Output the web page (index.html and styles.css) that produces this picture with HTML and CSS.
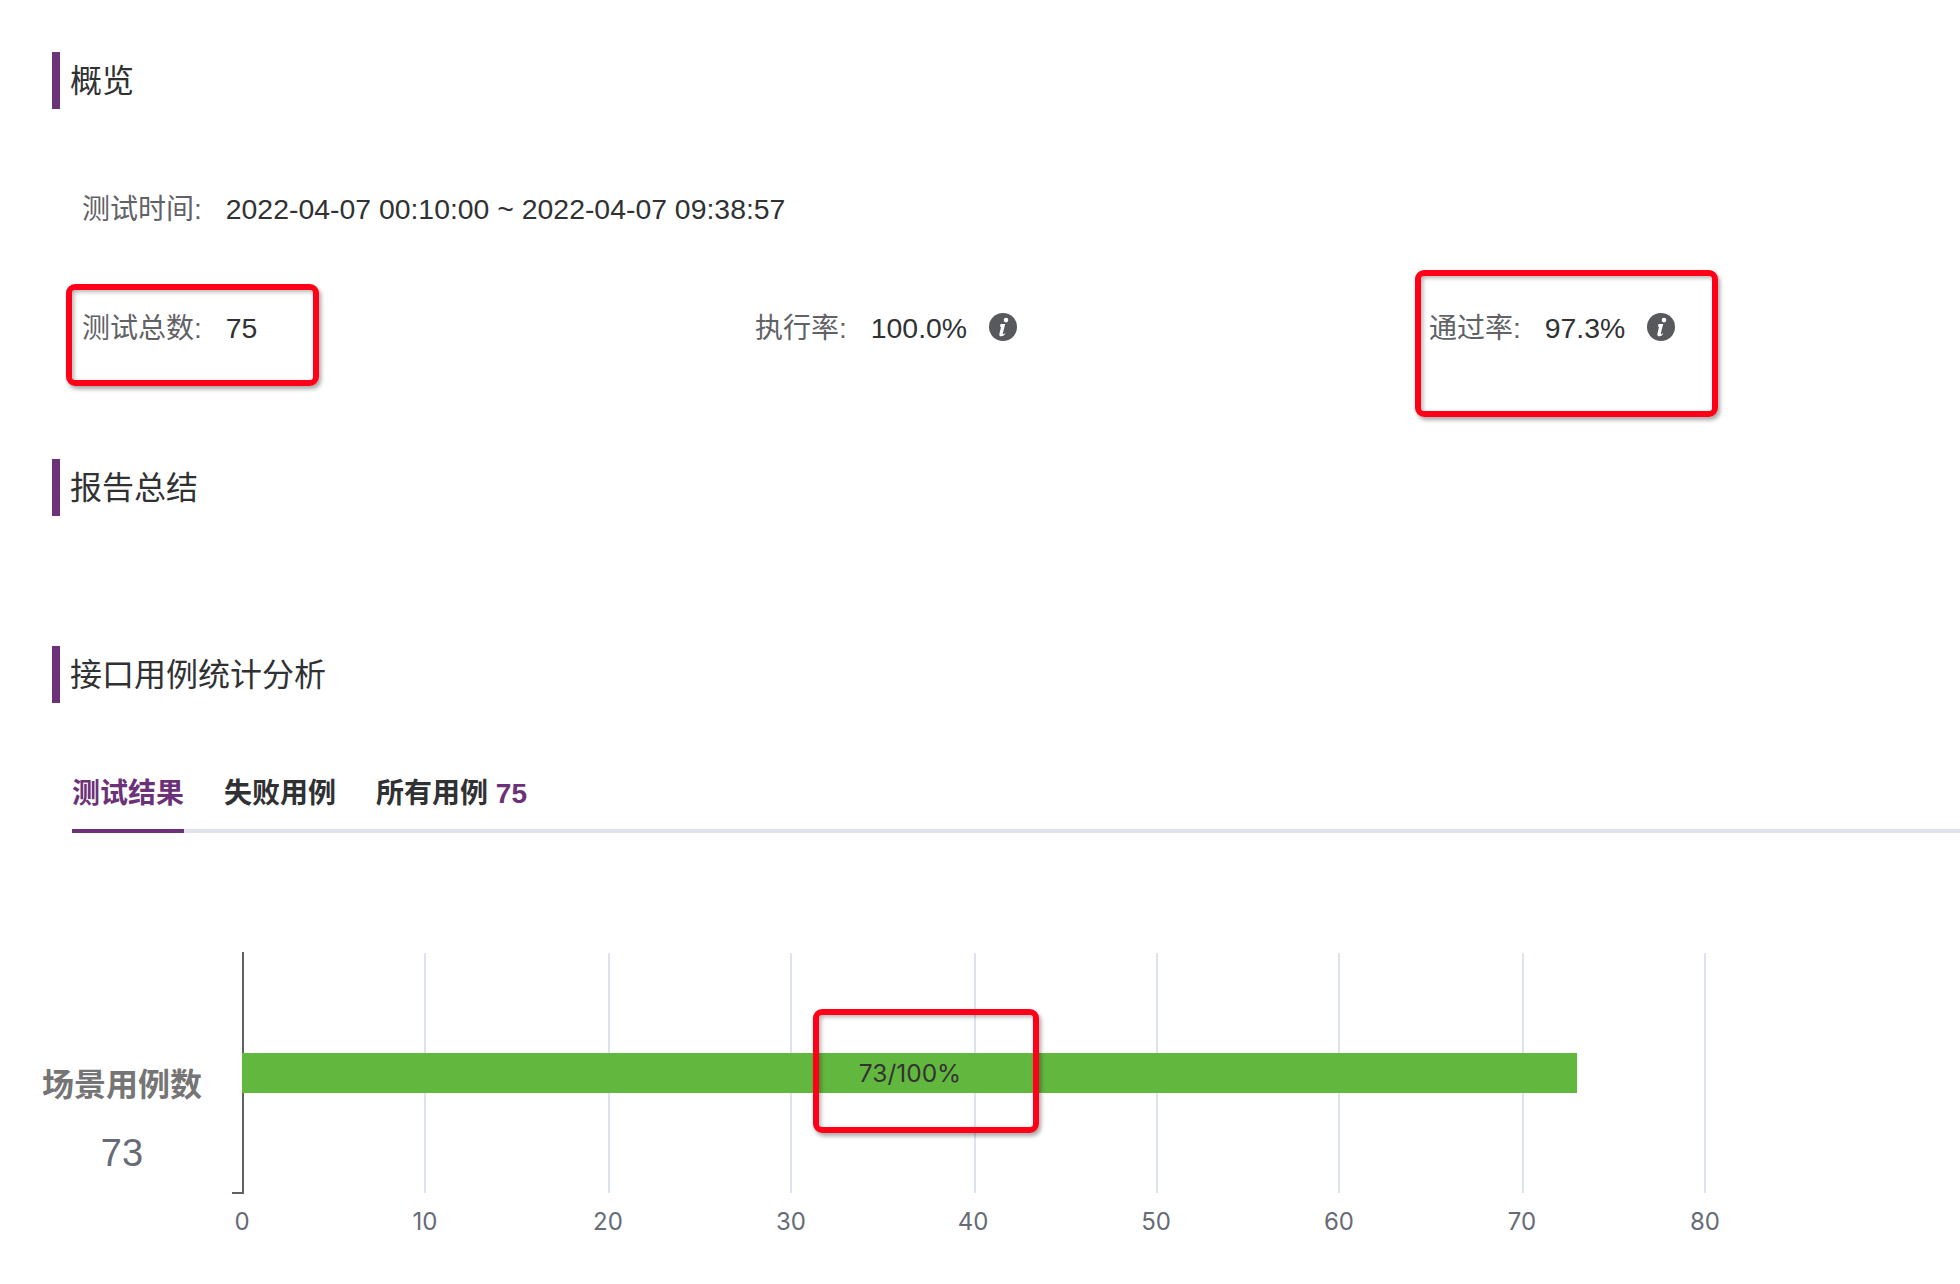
FILE: index.html
```html
<!DOCTYPE html>
<html lang="zh-CN">
<head>
<meta charset="utf-8">
<title>概览</title>
<link rel="stylesheet" href="styles.css">
</head>
<body>
<main class="page">
  <h2 class="section-title">概览</h2>
  <div class="row row-time"><span class="label">测试时间:</span><span class="value">2022-04-07 00:10:00 ~ 2022-04-07 09:38:57</span></div>
  <div class="row stats">
    <div class="stat"><span class="label">测试总数:</span><span class="value">75</span></div>
    <div class="stat"><span class="label">执行率:</span><span class="value">100.0%</span>
      <svg class="info" viewBox="0 0 28 28"><circle cx="14" cy="14" r="14"/><path class="info-i" d="M11.6 11h4.6l-2.4 9.4q-.2.8.4.8.6 0 1.5-1l.6.5q-1.8 2.6-4 2.6-2.4 0-1.9-2.4l1.5-6.5q.2-.9-.9-1l.1-.7zM17 4.8a2.3 2.3 0 1 1 0 4.6 2.3 2.3 0 0 1 0-4.6z"/></svg>
    </div>
    <div class="stat"><span class="label">通过率:</span><span class="value">97.3%</span>
      <svg class="info" viewBox="0 0 28 28"><circle cx="14" cy="14" r="14"/><path class="info-i" d="M11.6 11h4.6l-2.4 9.4q-.2.8.4.8.6 0 1.5-1l.6.5q-1.8 2.6-4 2.6-2.4 0-1.9-2.4l1.5-6.5q.2-.9-.9-1l.1-.7zM17 4.8a2.3 2.3 0 1 1 0 4.6 2.3 2.3 0 0 1 0-4.6z"/></svg>
    </div>
  </div>
  <h2 class="section-title title-summary">报告总结</h2>
  <h2 class="section-title title-analysis">接口用例统计分析</h2>
  <nav class="tabs">
    <span class="tab active">测试结果</span>
    <span class="tab">失败用例</span>
    <span class="tab">所有用例 <b class="count">75</b></span>
  </nav>
  <svg class="chart" viewBox="0 833 1960 451">
    <g class="grid">
      <rect x="424" y="953" width="2" height="240"/>
      <rect x="608" y="953" width="2" height="240"/>
      <rect x="790" y="953" width="2" height="240"/>
      <rect x="974" y="953" width="2" height="240"/>
      <rect x="1156" y="953" width="2" height="240"/>
      <rect x="1338" y="953" width="2" height="240"/>
      <rect x="1522" y="953" width="2" height="240"/>
      <rect x="1704" y="953" width="2" height="240"/>
    </g>
    <path class="axis" d="M243 952V1193H232"/>
    <rect class="bar" x="242" y="1053" width="1335" height="40"/>
    <text class="bar-label" x="910" y="1082">73/100%</text>
    <text class="cat-name" x="122" y="1096">场景用例数</text>
    <text class="cat-value" x="122" y="1166">73</text>
    <g class="ticks">
      <text x="242" y="1230">0</text>
      <text x="425" y="1230">10</text>
      <text x="608" y="1230">20</text>
      <text x="791" y="1230">30</text>
      <text x="973" y="1230">40</text>
      <text x="1156" y="1230">50</text>
      <text x="1339" y="1230">60</text>
      <text x="1522" y="1230">70</text>
      <text x="1705" y="1230">80</text>
    </g>
  </svg>
  <div class="mark mark-total"></div>
  <div class="mark mark-pass"></div>
  <div class="mark mark-bar"></div>
</main>
</body>
</html>
```
FILE: styles.css
```css
* { box-sizing: border-box; }
html, body { margin: 0; background: #fff; }
body {
  font-family: "Liberation Sans", "Noto Sans CJK SC", sans-serif;
  color: #303133;
}
.page {
  position: relative;
  width: 1960px;
  height: 1284px;
  overflow: hidden;
  padding-top: 52px;
}
.section-title {
  margin: 0 0 0 52px;
  height: 57px;
  padding-left: 10px;
  border-left: 8px solid #6c3279;
  font-size: 32px;
  font-weight: 400;
  line-height: 59px;
  color: #303133;
}
.title-summary { margin-top: 111px; }
.title-analysis { margin-top: 130px; }
.row {
  margin-left: 82px;
  height: 40px;
  font-size: 28px;
  line-height: 40px;
}
.row-time { margin-top: 80px; }
.stats {
  margin-top: 79px;
  display: grid;
  grid-template-columns: 673px 674px 1fr;
}
.stat { display: flex; align-items: center; height: 40px; }
.label { color: #606266; margin-right: 24px; }
.stat .label { margin-top: 2px; }
.value { color: #303133; font-size: 28.4px; }
.info { width: 28px; height: 28px; margin: 0 0 2px 22px; }
.info circle { fill: #58595d; }
.info-i { fill: #fff; }
.tabs {
  margin: 70px 0 0 72px;
  display: flex;
  gap: 40px;
  height: 60px;
  border-bottom: 4px solid #e0e2ec;
  font-size: 28px;
  line-height: 42px;
  font-weight: 700;
}
.tab { height: 60px; }
.tab.active { color: #6c3279; border-bottom: 4px solid #6c3279; }
.count { color: #6c3279; }
.chart { display: block; width: 1960px; height: 451px; }
.grid rect { fill: #dce3ee; }
.axis { fill: none; stroke: #5f6068; stroke-width: 2; }
.bar { fill: #62b83f; }
.bar-label { font: 400 24.5px Inter, "Liberation Sans", sans-serif; fill: #333; text-anchor: middle; }
.cat-name { font: 700 32px "Liberation Sans", "Noto Sans CJK SC", sans-serif; fill: #757575; text-anchor: middle; }
.cat-value { font: 400 38px "Liberation Sans", sans-serif; fill: #666b75; text-anchor: middle; }
.ticks text { font: 400 24px Inter, "Liberation Sans", sans-serif; fill: #666b75; text-anchor: middle; }
.mark {
  position: absolute;
  border: 6px solid #ff0018;
  border-radius: 9px;
  box-shadow: 2px 3px 4px rgba(0, 0, 0, .35), inset 2px 2px 4px rgba(0, 0, 0, .3);
}
.mark-total { left: 66px; top: 284px; width: 253px; height: 102px; }
.mark-pass { left: 1415px; top: 270px; width: 303px; height: 147px; }
.mark-bar { left: 813px; top: 1009px; width: 226px; height: 124px; }
```
